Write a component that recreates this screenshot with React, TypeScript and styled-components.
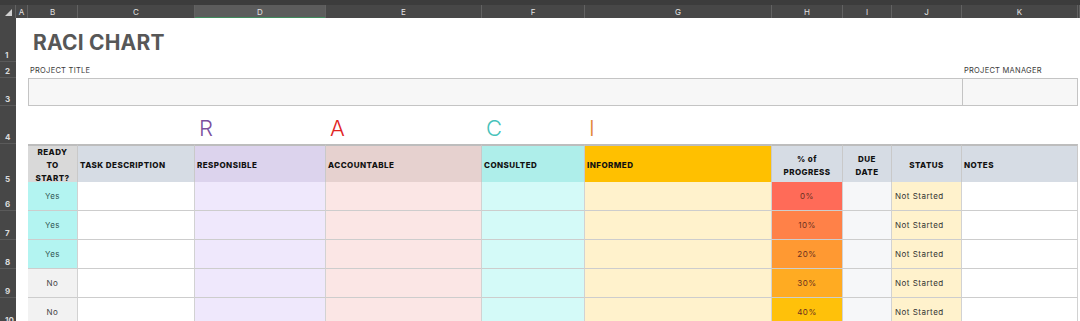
import * as React from "react";
import styled, { createGlobalStyle } from "styled-components";

const COLS =
  "16px 12px 50px 117px 131px 156px 103px 187px 71px 49px 70px 116px 2px";

const GlobalStyle = createGlobalStyle`
  html, body {
    margin: 0;
    padding: 0;
    height: 321px;
    overflow: hidden;
    background: #ffffff;
    font-family: Inter, "Open Sans", sans-serif;
  }
`;

const Sheet = styled.div`
  width: 1080px;
  display: flex;
  flex-direction: column;
`;

const ColumnBar = styled.div`
  display: grid;
  grid-template-columns: ${COLS};
  height: 18px;
  background: #474747;
  border-top: 5px solid #3c3c3c;
  box-sizing: border-box;
`;

const ColLetter = styled.div<{ $selected?: boolean }>`
  display: flex;
  align-items: center;
  justify-content: center;
  font-size: 8px;
  color: #e4e4e4;
  border-right: 1px solid #626262;
  background: ${(p) => (p.$selected ? "#5c5c5c" : "transparent")};
  box-shadow: ${(p) => (p.$selected ? "inset 0 -1px 0 #3f8a5c" : "none")};
`;

const Corner = styled.div`
  display: flex;
  align-items: flex-end;
  justify-content: flex-end;
  padding: 0 3px 2px 0;
  border-right: 1px solid #626262;
`;

const Row = styled.div<{ $h: number }>`
  display: grid;
  grid-template-columns: ${COLS};
  height: ${(p) => p.$h}px;
`;

const RowNum = styled.div`
  display: flex;
  align-items: flex-end;
  padding: 0 0 1px 5px;
  background: #474747;
  color: #dcdcdc;
  font-size: 8px;
  font-weight: 700;
  border-bottom: 1px solid #5a5a5a;
  box-sizing: border-box;
`;

const Blank = styled.div<{ $span?: number }>`
  grid-column: span ${(p) => p.$span ?? 1};
`;

const Title = styled.div`
  grid-column: span 11;
  display: flex;
  align-items: center;
  padding: 4px 0 0 5px;
  font-size: 21px;
  font-weight: 700;
  color: #575757;
  letter-spacing: 0.2px;
`;

const Label = styled.div<{ $span?: number }>`
  grid-column: span ${(p) => p.$span ?? 1};
  display: flex;
  align-items: center;
  padding-left: 2px;
  font-size: 7.5px;
  letter-spacing: 0.25px;
  color: #3a3a3a;
`;

const InputBox = styled.div<{ $span?: number }>`
  grid-column: span ${(p) => p.$span ?? 1};
  background: #f7f7f7;
  border: 1px solid #c4c4c4;
  border-right-width: ${(p) => (p.$span && p.$span > 1 ? 0 : 1)}px;
`;

const Letter = styled.div<{ $color: string }>`
  display: flex;
  align-items: flex-end;
  padding: 0 0 5px 4px;
  font-size: 22px;
  font-weight: 300;
  line-height: 1;
  color: ${(p) => p.$color};
`;

const HeadCell = styled.div<{ $bg: string; $center?: boolean }>`
  display: flex;
  align-items: center;
  justify-content: ${(p) => (p.$center ? "center" : "flex-start")};
  text-align: ${(p) => (p.$center ? "center" : "left")};
  padding: 0 2px;
  background: ${(p) => p.$bg};
  border-top: 2px solid #bdbdbd;
  border-bottom: 1px solid #bdbdbd;
  border-right: 1px solid #c9c9c9;
  font-size: 8px;
  font-weight: 800;
  letter-spacing: 0.45px;
  line-height: 13px;
  color: #111;
  box-sizing: border-box;
`;

const Cell = styled.div<{ $bg: string; $center?: boolean; $color?: string }>`
  display: flex;
  align-items: center;
  justify-content: ${(p) => (p.$center ? "center" : "flex-start")};
  padding: 0 3px;
  background: ${(p) => p.$bg};
  border-bottom: 1px solid #cdcdcd;
  border-right: 1px solid #d2d2d2;
  font-size: 8px;
  letter-spacing: 0.5px;
  color: ${(p) => p.$color ?? "#333"};
  box-sizing: border-box;
`;

const letters = ["", "A", "B", "C", "D", "E", "F", "G", "H", "I", "J", "K", ""];

const headers: { text: React.ReactNode; bg: string; center?: boolean }[] = [
  { text: <>READY<br />TO<br />START?</>, bg: "#d9d9d9", center: true },
  { text: "TASK DESCRIPTION", bg: "#d6dce4" },
  { text: "RESPONSIBLE", bg: "#dcd3ed" },
  { text: "ACCOUNTABLE", bg: "#e6d1cf" },
  { text: "CONSULTED", bg: "#aeeeea" },
  { text: "INFORMED", bg: "#ffc000" },
  { text: <>% of<br />PROGRESS</>, bg: "#d6dce4", center: true },
  { text: <>DUE<br />DATE</>, bg: "#d6dce4", center: true },
  { text: "STATUS", bg: "#d6dce4", center: true },
  { text: "NOTES", bg: "#d6dce4" },
];

const tasks = [
  { ready: "Yes", progress: "0%", color: "#ff6b58" },
  { ready: "Yes", progress: "10%", color: "#ff8148" },
  { ready: "Yes", progress: "20%", color: "#ff9932" },
  { ready: "No", progress: "30%", color: "#ffab22" },
  { ready: "No", progress: "40%", color: "#ffc10a" },
];

const App: React.FC = () => {
  return (
    <Sheet>
      <GlobalStyle />
      <ColumnBar>
        <Corner>
          <svg width="7" height="7" viewBox="0 0 7 7">
            <polygon points="7,0 7,7 0,7" fill="#d0d0d0" />
          </svg>
        </Corner>
        {letters.slice(1).map((l, i) => (
          <ColLetter key={i} $selected={l === "D"}>
            {l}
          </ColLetter>
        ))}
      </ColumnBar>

      <Row $h={44}>
        <RowNum>1</RowNum>
        <Blank />
        <Title>RACI CHART</Title>
      </Row>

      <Row $h={16}>
        <RowNum>2</RowNum>
        <Blank />
        <Label $span={9}>PROJECT TITLE</Label>
        <Label>PROJECT MANAGER</Label>
      </Row>

      <Row $h={28}>
        <RowNum>3</RowNum>
        <Blank />
        <InputBox $span={9} />
        <InputBox />
      </Row>

      <Row $h={38}>
        <RowNum>4</RowNum>
        <Blank $span={3} />
        <Letter $color="#7b4f9e">R</Letter>
        <Letter $color="#e0241f">A</Letter>
        <Letter $color="#46c2ba">C</Letter>
        <Letter $color="#e2833a">I</Letter>
      </Row>

      <Row $h={38}>
        <RowNum>5</RowNum>
        <Blank />
        {headers.map((h, i) => (
          <HeadCell key={i} $bg={h.bg} $center={h.center}>
            {h.text}
          </HeadCell>
        ))}
      </Row>

      {tasks.map((t, i) => (
        <Row $h={29} key={i}>
          <RowNum>{i + 6}</RowNum>
          <Blank />
          <Cell
            $bg={t.ready === "Yes" ? "#b3f4f1" : "#f2f2f2"}
            $color={t.ready === "Yes" ? "#2f5552" : "#444"}
            $center
          >
            {t.ready}
          </Cell>
          <Cell $bg="#ffffff" />
          <Cell $bg="#efe8fc" />
          <Cell $bg="#fbe6e5" />
          <Cell $bg="#d4faf8" />
          <Cell $bg="#fff2cc" />
          <Cell $bg={t.color} $color="#6a3020" $center>
            {t.progress}
          </Cell>
          <Cell $bg="#f6f7f9" />
          <Cell $bg="#fff2cc" $color="#333">
            Not Started
          </Cell>
          <Cell $bg="#ffffff" />
        </Row>
      ))}
    </Sheet>
  );
};

export default App;
